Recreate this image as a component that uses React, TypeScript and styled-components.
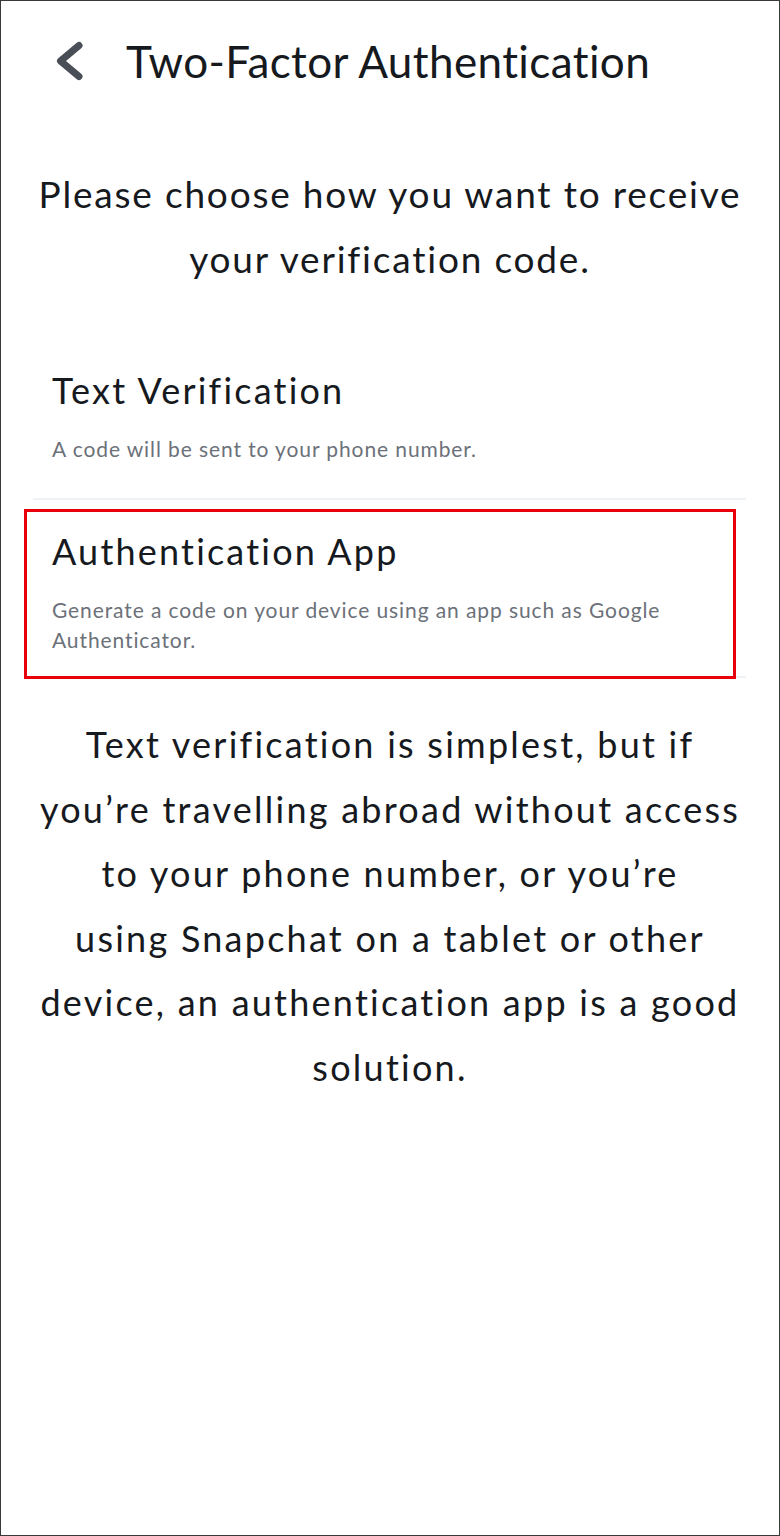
import React from "react";
import styled, { createGlobalStyle } from "styled-components";

const GlobalStyle = createGlobalStyle`
  html, body { margin: 0; padding: 0; background: #ffffff; }
  body { font-family: Lato, "Open Sans", sans-serif; -webkit-font-smoothing: antialiased; }
  * { box-sizing: border-box; }
`;

const Frame = styled.div`
  width: 780px;
  height: 1536px;
  border: 1px solid #3a3a3a;
  background: #ffffff;
  display: flex;
  flex-direction: column;
  color: #16191d;
`;

const Header = styled.header`
  display: flex;
  align-items: center;
  gap: 38px;
  padding: 30px 0 0 51px;
`;

const BackButton = styled.button`
  display: flex;
  border: none;
  background: none;
  padding: 0;
  cursor: pointer;
`;

const Title = styled.h1`
  margin: 0;
  font-size: 44px;
  line-height: 60px;
  font-weight: 400;
  letter-spacing: 0.4px;
  color: #16191d;
`;

const Lead = styled.p`
  margin: 70px 0 0;
  text-align: center;
  font-size: 37px;
  line-height: 65px;
  font-weight: 400;
  letter-spacing: 1.8px;
`;

const OptionList = styled.div`
  display: flex;
  flex-direction: column;
  margin: 48px 33px 0 32px;
`;

const Option = styled.div`
  position: relative;
  display: flex;
  flex-direction: column;
  gap: 22px;
  min-height: 161px;
  padding: 29px 0 21px 19px;
  border-bottom: 2px solid #f0f3f6;
`;

const OptionTitle = styled.div`
  font-size: 36px;
  line-height: 44px;
  letter-spacing: 2.2px;
  color: #16191d;
`;

const OptionText = styled.div`
  font-size: 21px;
  line-height: 30px;
  letter-spacing: 0.9px;
  color: #6c7179;
  max-width: 660px;
`;

const Highlight = styled.div`
  position: absolute;
  left: -9px;
  top: 9px;
  width: 712px;
  height: 170px;
  border: 3px solid #e8000b;
  pointer-events: none;
`;

const Note = styled.p`
  margin: 34px 0 0;
  text-align: center;
  font-size: 36px;
  line-height: 64.6px;
  font-weight: 400;
  letter-spacing: 2.25px;
`;

const options = [
  { title: "Text Verification", text: "A code will be sent to your phone number.", highlighted: false },
  {
    title: "Authentication App",
    text: "Generate a code on your device using an app such as Google Authenticator.",
    highlighted: true,
  },
];

export default function App() {
  return (
    <>
      <GlobalStyle />
      <Frame>
        <Header>
          <BackButton aria-label="Back">
            <svg width="36" height="44" viewBox="0 0 36 44">
              <path d="M27 6.5 L8.5 22 L27 37.5" fill="none" stroke="#4a4f57" strokeWidth="7" strokeLinecap="round" strokeLinejoin="round" />
            </svg>
          </BackButton>
          <Title>Two-Factor Authentication</Title>
        </Header>
        <Lead>
          Please choose how you want to receive
          <br />
          your verification code.
        </Lead>
        <OptionList>
          {options.map((o) => (
            <Option key={o.title}>
              <OptionTitle>{o.title}</OptionTitle>
              <OptionText>{o.text}</OptionText>
              {o.highlighted && <Highlight />}
            </Option>
          ))}
        </OptionList>
        <Note>
          Text verification is simplest, but if
          <br />
          you’re travelling abroad without access
          <br />
          to your phone number, or you’re
          <br />
          using Snapchat on a tablet or other
          <br />
          device, an authentication app is a good
          <br />
          solution.
        </Note>
      </Frame>
    </>
  );
}
